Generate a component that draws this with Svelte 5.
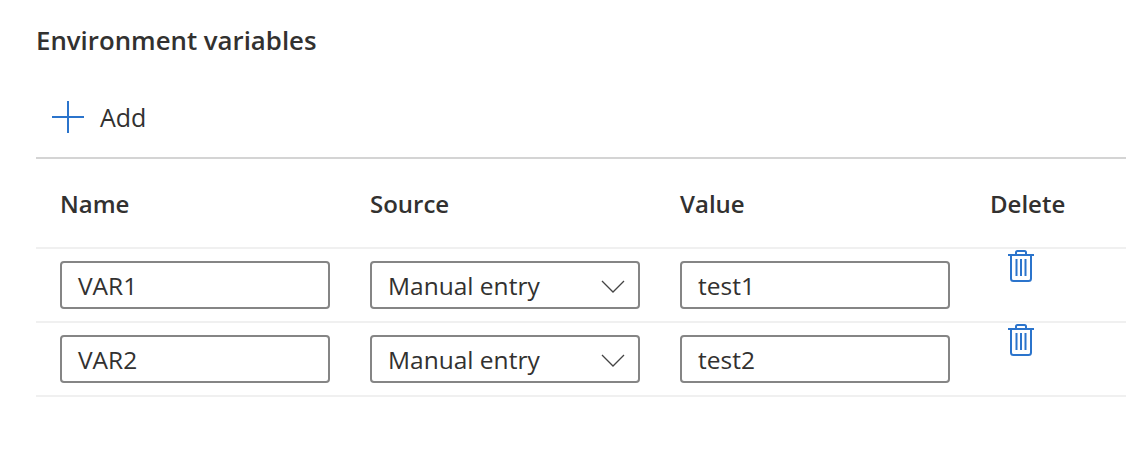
<script>
  const rows = [
    { name: 'VAR1', source: 'Manual entry', value: 'test1' },
    { name: 'VAR2', source: 'Manual entry', value: 'test2' }
  ];
</script>

<div class="page">
  <h2>Environment variables</h2>

  <button class="add">
    <svg width="34" height="34" viewBox="0 0 34 34">
      <path d="M1 17h32M17 1v32" stroke="#2b74cc" stroke-width="2" fill="none" />
    </svg>
    <span>Add</span>
  </button>

  <div class="table">
    <div class="row head">
      <div>Name</div>
      <div>Source</div>
      <div>Value</div>
      <div>Delete</div>
    </div>
    {#each rows as row}
      <div class="row">
        <div class="field">{row.name}</div>
        <div class="field select">
          <span>{row.source}</span>
          <svg width="26" height="14" viewBox="0 0 26 14">
            <path d="M2 2l11 11L24 2" stroke="#444" stroke-width="1.3" fill="none" />
          </svg>
        </div>
        <div class="field">{row.value}</div>
        <div class="trash">
          <svg width="26" height="32" viewBox="0 0 26 32">
            <g stroke="#2b74cc" fill="none" stroke-width="2">
              <path d="M0 5h26" />
              <path d="M8 5V2.5Q8 1 9.5 1h7Q18 1 18 2.5V5" />
              <path d="M3 5v23.500q0 2.500 2.500 2.500h15q2.500 0 2.500-2.500V5" />
              <path d="M8.500 9v17M13 9v17M17.500 9v17" />
            </g>
          </svg>
        </div>
      </div>
    {/each}
  </div>
</div>

<style>
  :global(body) {
    background: #fff;
  }

  .page {
    width: 1090px;
    padding: 24px 0 0 36px;
    font-family: "Open Sans", sans-serif;
    color: #323130;
  }

  h2 {
    margin: 0;
    font-size: 25.8px;
    line-height: 32px;
    font-weight: 600;
  }

  .add {
    display: flex;
    align-items: center;
    gap: 15px;
    margin: 44px 0 0 15px;
    padding: 0;
    border: none;
    background: none;
    font: inherit;
    font-size: 25px;
    color: #323130;
  }

  .table {
    margin-top: 23px;
    border-top: 2px solid #d4d4d4;
  }

  .row {
    display: grid;
    grid-template-columns: repeat(3, 310px) 1fr;
    height: 74px;
    box-sizing: border-box;
    padding: 12px 0 0 24px;
    border-bottom: 2px solid #f0f0f0;
  }

  .head {
    height: 90px;
    padding-top: 28px;
    font-size: 24px;
    font-weight: 600;
  }

  .field {
    width: 270px;
    height: 48px;
    box-sizing: border-box;
    display: flex;
    align-items: center;
    justify-content: space-between;
    padding: 0 16px;
    border: 2px solid #858585;
    border-radius: 4px;
    font-size: 24.5px;
  }

  .select svg {
    margin: 1px -4px 0 0;
  }

  .trash {
    padding-left: 18px;
    margin-top: -11px;
  }
</style>
